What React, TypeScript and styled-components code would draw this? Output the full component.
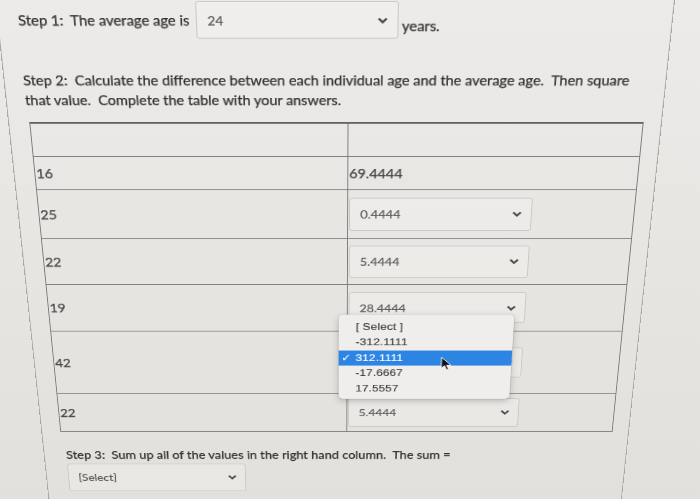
import styled, { createGlobalStyle } from "styled-components";

const GlobalStyle = createGlobalStyle`
  html, body {
    margin: 0;
    padding: 0;
    overflow: hidden;
    background: #e6e4e1;
  }
  body {
    font-family: Lato, "Noto Sans", sans-serif;
  }
`;

const Photo = styled.div`
  width: 700px;
  height: 499px;
  overflow: hidden;
  background: linear-gradient(180deg, #ecebe9 0%, #e7e5e2 55%, #e2e0dc 100%);
`;

// the page as seen through the camera: top edge closer, bottom tilted away
const Screen = styled.div`
  position: relative;
  box-sizing: border-box;
  width: 680px;
  min-height: 640px;
  margin-left: -5px;
  padding: 2px 0 0 20px;
  border-left: 1px solid #a8a7a4;
  border-right: 1px solid #a8a7a4;
  transform-origin: 341px 0;
  transform: perspective(1000px) rotateX(-17.46deg);
  color: #303030;
  font-size: 14.9px;
  -webkit-text-stroke: 0.25px #303030;
`;

const StepOne = styled.div`
  display: flex;
  align-items: center;
  height: 38px;
`;

const Label = styled.span`
  margin-right: 6px;
  white-space: nowrap;
`;

const Unit = styled.span`
  margin: 11px 0 0 4px;
`;

const Paragraph = styled.p`
  margin: 35px 0 0 -1px;
  line-height: 22px;
`;

const SelectBox = styled.div<{ $w: number }>`
  display: flex;
  align-items: center;
  justify-content: space-between;
  box-sizing: border-box;
  width: ${(p) => p.$w}px;
  height: 40px;
  padding: 0 10px 0 11px;
  border: 1px solid #c8c7c4;
  border-radius: 3px;
  background: rgba(255, 255, 255, 0.22);
  font-size: 13.8px;
  color: #555;
  -webkit-text-stroke: 0.15px #555;
`;

const SelectValue = styled.span<{ $hidden?: boolean }>`
  visibility: ${(p) => (p.$hidden ? "hidden" : "visible")};
`;

const SelectWrap = styled.div`
  position: relative;
`;

const Table = styled.table`
  margin: 14px 0 0 1px;
  width: 639px;
  border-collapse: collapse;
  border: 1px solid #6c6c6c;
  border-top: 2px solid #636363;
`;

const Row = styled.tr<{ $h: number }>`
  height: ${(p) => p.$h}px;
`;

const Cell = styled.td<{ $w?: number }>`
  width: ${(p) => (p.$w ? `${p.$w}px` : "auto")};
  padding: 0 0 0 1px;
  border: 1px solid #7b7b7b;
  vertical-align: middle;
  font-size: 15.2px;
  color: #484848;
`;

const StepThree = styled.p`
  margin: 21px 0 0 5px;
  line-height: 22px;
`;

const SumSelect = styled.div`
  margin: 2px 0 0 5px;
`;

const Menu = styled.ul`
  position: absolute;
  left: -11px;
  top: -43px;
  z-index: 2;
  width: 195px;
  margin: 0;
  padding: 6px 0 4px;
  list-style: none;
  background: #efeeec;
  border-radius: 5px;
  box-shadow: 0 3px 9px rgba(0, 0, 0, 0.22), 0 0 0 1px rgba(0, 0, 0, 0.07);
  font-family: "Liberation Sans", Arial, sans-serif;
  font-size: 13.6px;
  color: #3a3a3a;
  -webkit-text-stroke: 0.1px #3a3a3a;
`;

const MenuItem = styled.li<{ $active?: boolean }>`
  position: relative;
  height: 20.5px;
  line-height: 20.5px;
  padding-left: 19px;
  background: ${(p) => (p.$active ? "#2c85e3" : "transparent")};
  color: ${(p) => (p.$active ? "#fff" : "inherit")};
  -webkit-text-stroke: 0.1px ${(p) => (p.$active ? "#fff" : "#3a3a3a")};
`;

const Check = styled.span`
  position: absolute;
  left: 3px;
  top: 0;
  font-family: "DejaVu Sans", sans-serif;
  font-size: 13px;
  font-weight: bold;
`;

const Cursor = styled.svg`
  position: absolute;
  left: 458px;
  top: 421px;
  z-index: 3;
`;

const Chevron = () => (
  <svg width="10" height="7" viewBox="0 0 10 7">
    <polyline points="1,1.5 5,5.5 9,1.5" fill="none" stroke="#454545" strokeWidth="2.2" />
  </svg>
);

const Select = ({ value, w, open }: { value: string; w: number; open?: boolean }) => (
  <SelectBox $w={w}>
    <SelectValue $hidden={open}>{value}</SelectValue>
    <Chevron />
  </SelectBox>
);

const options = ["[ Select ]", "-312.1111", "312.1111", "-17.6667", "17.5557"];

const rows = [
  { age: "", value: "", h: 38, kind: "empty" },
  { age: "16", value: "69.4444", h: 39, kind: "text" },
  { age: "25", value: "0.4444", h: 59, kind: "select" },
  { age: "22", value: "5.4444", h: 57, kind: "select" },
  { age: "19", value: "28.4444", h: 60, kind: "select" },
  { age: "42", value: "312.1111", h: 83, kind: "open" },
  { age: "22", value: "5.4444", h: 53, kind: "select" },
];

export default function App() {
  return (
    <Photo>
      <GlobalStyle />
      <Screen>
        <StepOne>
          <Label>Step 1:&nbsp; The average age is</Label>
          <Select value="24" w={204} />
          <Unit>years.</Unit>
        </StepOne>

        <Paragraph>
          Step 2:&nbsp; Calculate the difference between each individual age and the average age.&nbsp; Then square
          <br />
          that value.&nbsp; Complete the table with your answers.
        </Paragraph>

        <Table>
          <tbody>
            {rows.map((r, i) => (
              <Row key={i} $h={r.h}>
                <Cell $w={329}>{r.age}</Cell>
                <Cell>
                  {r.kind === "text" && r.value}
                  {r.kind === "select" && <Select value={r.value} w={196} />}
                  {r.kind === "open" && (
                    <SelectWrap>
                      <Select value={r.value} w={196} open />
                      <Menu>
                        {options.map((o) => (
                          <MenuItem key={o} $active={o === r.value}>
                            {o === r.value && <Check>✓</Check>}
                            {o}
                          </MenuItem>
                        ))}
                      </Menu>
                    </SelectWrap>
                  )}
                </Cell>
              </Row>
            ))}
          </tbody>
        </Table>

        <StepThree>Step 3:&nbsp; Sum up all of the values in the right hand column.&nbsp; The sum =</StepThree>
        <SumSelect>
          <Select value="[Select]" w={209} />
        </SumSelect>

        <Cursor width="13" height="19" viewBox="0 0 13 19">
          <path d="M1 1 L1 15.5 L4.6 12.2 L7.2 18 L9.4 17 L6.9 11.4 L11.8 11.4 Z" fill="#111" stroke="#fff" strokeWidth="1" />
        </Cursor>
      </Screen>
    </Photo>
  );
}
